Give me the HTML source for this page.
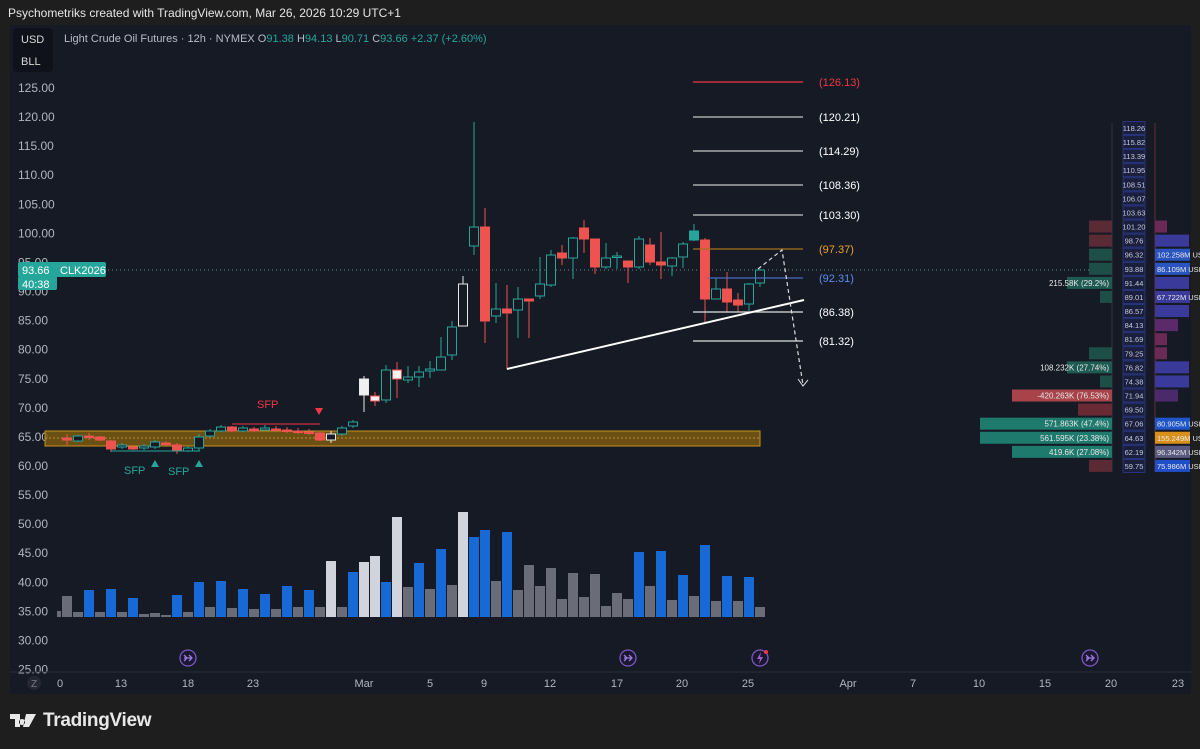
<!DOCTYPE html>
<html><head><meta charset="utf-8"><style>
html,body{margin:0;padding:0;background:#1e1e1e;width:1200px;height:749px;overflow:hidden;font-family:"Liberation Sans","DejaVu Sans",sans-serif}
#top{position:absolute;left:8px;top:6px;font-size:12px;color:#e6e6e6}
#panel{position:absolute;left:10px;top:25px;width:1181px;height:669px;background:#161a25}
#logo{position:absolute;left:10px;top:710px;color:#e8e8e8;font-size:19px;font-weight:bold;letter-spacing:-0.3px}
svg{position:absolute;left:0;top:0}
</style></head><body>
<div id="top">Psychometriks created with TradingView.com, Mar 26, 2026 10:29 UTC+1</div>
<div id="panel"></div>
<svg id="s" width="1200" height="749" font-family="Liberation Sans, DejaVu Sans, sans-serif"></svg>
<div id="logo"><svg width="28" height="16" style="position:relative;display:inline-block;vertical-align:-2px;left:0;top:0"><path d="M0 2h10v13h-5V7H0z M12 7a3 3 0 1 0 0.01 0z M16 2h10l-7 13h-6z" fill="#e8e8e8"/></svg> TradingView</div>
<script>
var o='';
function y(p){return 88+(125-p)*5.815;}
o+='<rect x="13" y="28" width="40" height="44" rx="4" fill="#0f121a"/>';
o+='<text x="21" y="43" fill="#d8d8d8" font-size="11">USD</text><text x="21" y="65" fill="#d8d8d8" font-size="11">BLL</text>';
o+='<text x="64" y="42" font-size="11" fill="#b8bcc6">Light Crude Oil Futures · 12h · NYMEX  <tspan>O</tspan><tspan fill="#26a69a">91.38</tspan> <tspan>H</tspan><tspan fill="#26a69a">94.13</tspan> <tspan>L</tspan><tspan fill="#26a69a">90.71</tspan> <tspan>C</tspan><tspan fill="#26a69a">93.66  +2.37 (+2.60%)</tspan></text>';
for(var p=125;p>=25;p-=5){o+='<text x="18" y="'+(y(p)+4)+'" font-size="12" fill="#b2b5be">'+p.toFixed(2)+'</text>';}
o+='<line x1="10" y1="672" x2="1191" y2="672" stroke="#2a2e39"/>';
o+='<circle cx="34" cy="683" r="7" fill="#252832"/><text x="31" y="687" font-size="10" fill="#787b86">Z</text>';
var tl=[[60,'0'],[121,'13'],[188,'18'],[253,'23'],[364,'Mar'],[430,'5'],[484,'9'],[550,'12'],[617,'17'],[682,'20'],[748,'25'],[848,'Apr'],[913,'7'],[979,'10'],[1045,'15'],[1111,'20'],[1178,'23']];
tl.forEach(function(t){o+='<text x="'+t[0]+'" y="687" font-size="11" fill="#b2b5be" text-anchor="middle">'+t[1]+'</text>';});
var vt=[611,596,612,590,612,589,612,598,614,613,615,595,612,582,607,581,608,589,609,594,609,586,607,590,607,561,607,572,562,556,582,517,587,563,589,549,585,512,537,530,581,532,590,565,586,568,599,573,597,574,606,593,599,552,586,551,600,575,596,545,601,576,601,577,607];
var vc='gggbgbgbgggbgbgbgbgbgbgbgwgbwwbwgb'+'gbgwbbgbgggggggggggbgbgbgbgbgbg';
var col={g:'#6a6d78',b:'#1769d6',w:'#d1d4dc'};
for(var i=0;i<vt.length;i++){var l=51+11*i;var w=10;if(l<57){w=l+10-57;l=57;}o+='<rect x="'+l+'" y="'+vt[i]+'" width="'+w+'" height="'+(617-vt[i])+'" fill="'+col[vc[i]||'g']+'"/>';}
o+='<rect x="45" y="431" width="715" height="15" fill="#7a5a12" fill-opacity="0.85" stroke="#c8901c"/>';
o+='<line x1="45" y1="438" x2="760" y2="438" stroke="#e0a040" stroke-dasharray="2,2" stroke-width="0.8"/>';
o+='<line x1="100" y1="270" x2="1112" y2="270" stroke="#5d8f8a" stroke-dasharray="1,3"/>';
var C=[[67,438,440,434,445,'r'],[78,436,441,435,442,'g'],[89,436,437,433,440,'r'],[100,437,440,436,441,'r'],[111,441,449,440,452,'r'],[122,445,447,443,449,'g'],[133,447,449,445,450,'r'],[144,446,448,444,450,'g'],[155,442,447,440,449,'g'],[166,443,444,441,446,'r'],[177,445,451,443,454,'r'],[188,448,451,446,452,'g'],[199,437,448,434,451,'g'],[210,431,436,429,438,'g'],[221,427,431,425,432,'g'],[232,427,431,426,432,'r'],[243,428,431,426,432,'g'],[254,429,431,427,432,'r'],[265,428,430,425,431,'g'],[276,429,430,426,432,'r'],[287,430,431,427,433,'r'],[298,431,432,428,434,'r'],[309,432,433,429,435,'r'],[320,433,440,432,441,'r'],[331,434,440,431,443,'H'],[342,428,434,426,436,'g'],[353,422,426,420,428,'g'],[364,379,395,376,412,'W'],[375,396,401,392,406,'w'],[386,370,400,365,403,'g'],[397,370,379,362,398,'w'],[408,377,380,366,383,'g'],[419,372,377,366,387,'g'],[430,369,371,361,378,'g'],
[441,357,370,337,370,'g'],[452,327,355,321,360,'g'],[463,284,326,276,326,'H'],[474,227,246,122,255,'g'],[485,227,321,208,343,'r'],[496,309,316,283,323,'g'],[507,309,313,285,369,'r'],[518,299,310,287,338,'g'],[529,299,301,299,338,'r'],[540,284,296,257,299,'g'],[551,255,285,250,287,'g'],[562,253,258,245,265,'r'],[573,238,258,237,279,'g'],[584,228,239,220,253,'r'],[595,239,267,239,274,'r'],[606,258,267,243,269,'g'],[617,256,257,252,269,'g'],[628,261,267,261,283,'r'],[639,239,267,236,269,'g'],[650,245,262,238,265,'r'],[661,262,265,232,279,'r'],[672,258,266,257,276,'g'],[683,244,257,242,268,'g'],[694,231,240,224,241,'G'],[705,240,299,238,322,'r'],[716,289,299,278,299,'g'],[727,289,302,272,312,'r'],[738,300,305,293,312,'r'],[749,284,304,283,311,'g'],[760,270,283,269,287,'g']];
C.forEach(function(c){var x=c[0],t=c[5];var st={g:'#26a69a',G:'#26a69a',r:'#ef5350',W:'#e8e8e8',w:'#ef5350',H:'#e8e8e8'}[t];var f={g:'#161a25',G:'#26a69a',r:'#ef5350',W:'#f0f0f0',w:'#f4f4f4',H:'#161a25'}[t];
o+='<line x1="'+x+'" y1="'+c[3]+'" x2="'+x+'" y2="'+c[4]+'" stroke="'+st+'"/>';var h=Math.max(c[2]-c[1],1.5);
o+='<rect x="'+(x-4.5)+'" y="'+c[1]+'" width="9" height="'+h+'" fill="'+f+'" stroke="'+st+'" stroke-width="1"/>';});
o+='<line x1="232" y1="424" x2="320" y2="424" stroke="#f23645"/><text x="257" y="408" font-size="11" fill="#f23645">SFP</text><path d="M315 408h8l-4 7z" fill="#f23645"/>';
o+='<line x1="111" y1="451" x2="200" y2="451" stroke="#26a69a"/><text x="124" y="474" font-size="11" fill="#26a69a">SFP</text><text x="168" y="475" font-size="11" fill="#26a69a">SFP</text><path d="M151 467h8l-4-7z M195 467h8l-4-7z" fill="#26a69a"/>';
var F=[[82,'(126.13)','#f23645','#f23645'],[117,'(120.21)','#fff','#c8c8c8'],[151,'(114.29)','#fff','#c8c8c8'],[185,'(108.36)','#fff','#c8c8c8'],[215,'(103.30)','#fff','#c8c8c8'],[249,'(97.37)','#f0a030','#a8701c'],[278,'(92.31)','#5b8def','#4a6ac0'],[312,'(86.38)','#fff','#e0e0e0'],[341,'(81.32)','#fff','#e0e0e0']];
F.forEach(function(f){o+='<line x1="'+(f[0]==278?708:693)+'" y1="'+f[0]+'" x2="803" y2="'+f[0]+'" stroke="'+f[3]+'" stroke-width="1.3"/><text x="819" y="'+(f[0]+4)+'" font-size="11" fill="'+f[2]+'">'+f[1]+'</text>';});
o+='<line x1="507" y1="369" x2="804" y2="300" stroke="#fff" stroke-width="2"/>';
o+='<path d="M758 269L782 250L803 385" fill="none" stroke="#ddd" stroke-width="1.2" stroke-dasharray="4,3"/><path d="M798 379L803 386L808 380" fill="none" stroke="#ddd" stroke-width="1"/>';
o+='<rect x="18" y="262" width="88" height="15" rx="2" fill="#26a69a"/><rect x="18" y="276" width="39" height="14" rx="2" fill="#26a69a"/>';
o+='<text x="22" y="274" font-size="11" fill="#fff">93.66</text><text x="60" y="274" font-size="11" fill="#fff">CLK2026</text><text x="22" y="288" font-size="11" fill="#fff">40:38</text>';
o+='<line x1="1112" y1="123" x2="1112" y2="472" stroke="#3a3e4a" stroke-width="0.8"/><line x1="1155" y1="123" x2="1155" y2="472" stroke="#7a3040" stroke-width="0.8"/>';
var rl=['118.26','115.82','113.39','110.95','108.51','106.07','103.63','101.20','98.76','96.32','93.88','91.44','89.01','86.57','84.13','81.69','79.25','76.82','74.38','71.94','69.50','67.06','64.63','62.19','59.75'];
var L={7:[1089,'#5a2a35',''],8:[1089,'#5a2a35',''],9:[1089,'#1e4e48',''],10:[1089,'#1e4e48',''],11:[1067,'#1e5a52','215.58K (29.2%)'],12:[1100,'#1e4e48',''],16:[1089,'#1e4e48',''],17:[1067,'#1e5a52','108.232K (27.74%)'],18:[1100,'#1e4e48',''],19:[1012,'#a8434a','-420.263K (76.53%)'],20:[1078,'#6a2a33',''],21:[980,'#1f7a6e','571.863K (47.4%)'],22:[980,'#1f7a6e','561.595K (23.38%)'],23:[1012,'#1f7a6e','419.6K (27.08%)'],24:[1089,'#5a2a35','']};
var R={7:[1167,'#6a2a55',''],8:[1189,'#3a3a9a',''],9:[1190,'#2a55c0','102.258M USD'],10:[1190,'#2a55c0','86.109M USD'],11:[1189,'#3a3a9a',''],12:[1190,'#3a3a9a','67.722M USD'],13:[1189,'#3a3a9a',''],14:[1178,'#5a2a6a',''],15:[1167,'#6a2a55',''],16:[1167,'#6a2a55',''],17:[1189,'#3a3a9a',''],18:[1189,'#3a3a9a',''],19:[1178,'#4a2a6a',''],21:[1190,'#1f55c8','80.905M USD'],22:[1190,'#d9901a','155.249M USD'],23:[1190,'#5a5a80','96.342M USD'],24:[1190,'#1f4fc8','75.986M USD']};
rl.forEach(function(v,i){var cy=128+i*14.08;
o+='<rect x="1123" y="'+(cy-6.5)+'" width="22" height="13" fill="#1a1f3d" stroke="#2c3a8a" stroke-width="0.8"/><text x="1134" y="'+(cy+3)+'" font-size="7.5" fill="#c8cad8" text-anchor="middle">'+v+'</text>';
if(L[i]){var a=L[i];o+='<rect x="'+a[0]+'" y="'+(cy-6)+'" width="'+(1112-a[0])+'" height="12" fill="'+a[1]+'"/>';if(a[2])o+='<text x="1109" y="'+(cy+3)+'" font-size="8" fill="#e8e8e8" text-anchor="end">'+a[2]+'</text>';}
if(R[i]){var b=R[i];o+='<rect x="1155" y="'+(cy-6)+'" width="'+(b[0]-1155)+'" height="12" fill="'+b[1]+'"/>';if(b[2])o+='<text x="1157" y="'+(cy+3)+'" font-size="7.5" fill="#e8e8e8">'+b[2]+'</text>';}
});
function ic(x,z){o+='<circle cx="'+x+'" cy="658" r="8" fill="#1a1830" stroke="#7e57c2" stroke-width="1.3"/>';
if(z)o+='<path d="M'+(x+1)+' 652l-4 7h3l-1 5 4-7h-3z" fill="#a060d0"/><circle cx="'+(x+6)+'" cy="652" r="2" fill="#f23645"/>';
else o+='<path d="M'+(x-4)+' 655l3 3-3 3M'+(x-4)+' 658h8M'+(x+1)+' 655l3 3-3 3" fill="none" stroke="#9a7ae0" stroke-width="1.3"/>';}
ic(188);ic(628);ic(760,1);ic(1090);
document.getElementById('s').innerHTML=o;
</script>
</body></html>
